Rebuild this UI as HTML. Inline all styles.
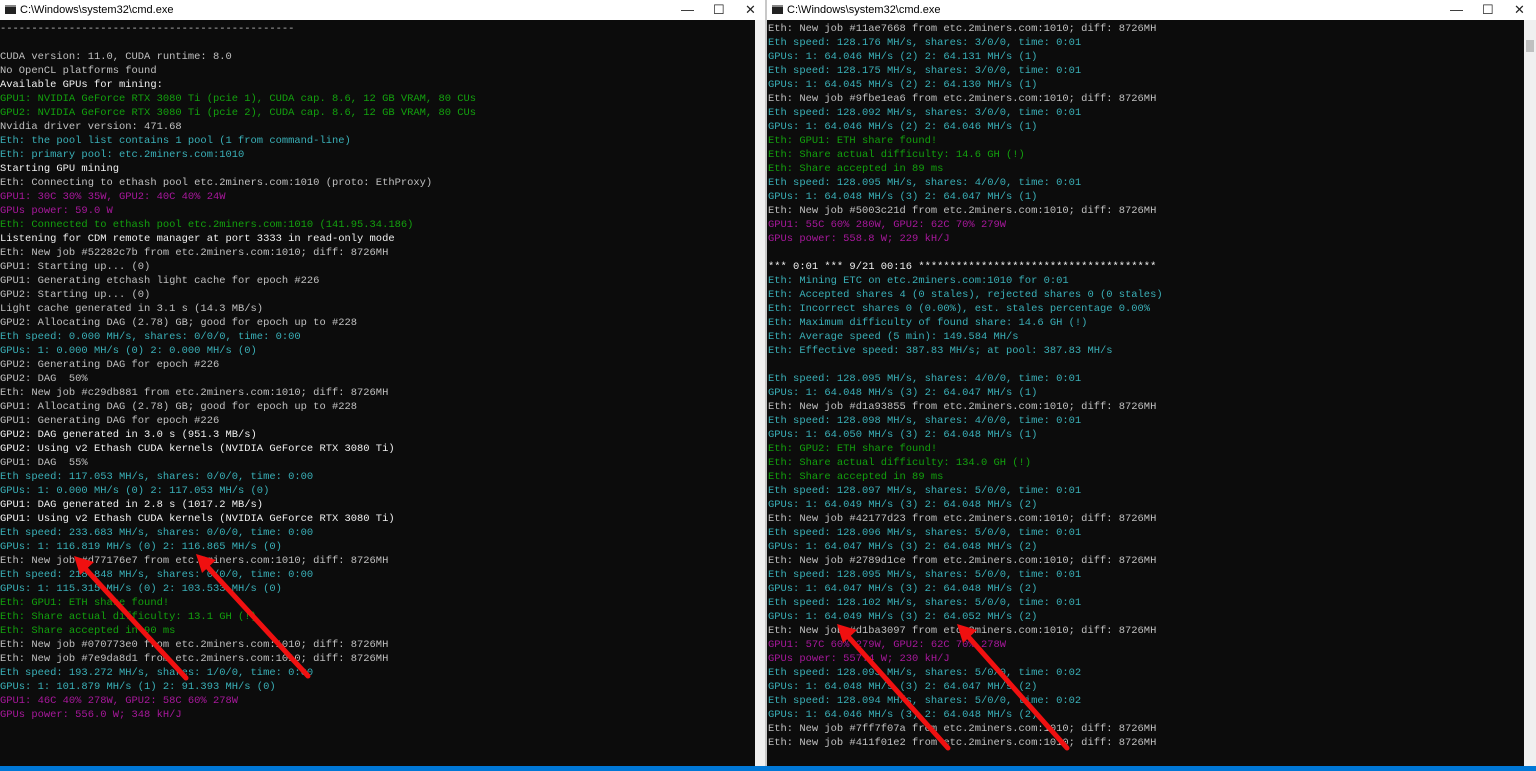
<!DOCTYPE html>
<html><head><meta charset="utf-8"><style>
*{margin:0;padding:0;box-sizing:border-box}
body{width:1536px;height:771px;overflow:hidden;background:#fff;position:relative;font-family:"Liberation Mono",monospace}
.tb{position:absolute;top:0;height:20px;background:#fff;font-family:"Liberation Sans",sans-serif;font-size:11px;color:#000}
.tb .ic{position:absolute;left:5px;top:5px;width:11px;height:9px;background:#222;border-top:2px solid #888}
.tb .t{position:absolute;left:20px;top:4px}
.tb .c{position:absolute;top:2px;font-size:13px;color:#222}
.con{position:absolute;top:20px;height:746px;background:#0c0c0c;overflow:hidden}
pre{font-family:"Liberation Mono",monospace;font-size:10.45px;line-height:14px;color:#c0c0c0;padding-top:2px;white-space:pre}
.w{color:#f2f2f2}.c{color:#3ab0b8}.g{color:#13a10e}.m{color:#a8189c}
.sb{position:absolute;top:20px;height:746px;background:#f0f0f0}
</style></head><body>
<div class="tb" style="left:0;width:765px"><div class="ic"></div><div class="t">C:\Windows\system32\cmd.exe</div><div class="c" style="left:681px">—</div><div class="c" style="left:713px">☐</div><div class="c" style="left:745px">✕</div></div>
<div class="tb" style="left:767px;width:769px"><div class="ic"></div><div class="t">C:\Windows\system32\cmd.exe</div><div class="c" style="left:683px">—</div><div class="c" style="left:715px">☐</div><div class="c" style="left:747px">✕</div></div>
<div style="position:absolute;left:765px;top:0;width:2px;height:771px;background:#c8c8c8"></div>
<div class="con" style="left:0;width:755px"><pre>-----------------------------------------------

CUDA version: 11.0, CUDA runtime: 8.0
No OpenCL platforms found
<span class="w">Available GPUs for mining:</span>
<span class="g">GPU1: NVIDIA GeForce RTX 3080 Ti (pcie 1), CUDA cap. 8.6, 12 GB VRAM, 80 CUs</span>
<span class="g">GPU2: NVIDIA GeForce RTX 3080 Ti (pcie 2), CUDA cap. 8.6, 12 GB VRAM, 80 CUs</span>
Nvidia driver version: 471.68
<span class="c">Eth: the pool list contains 1 pool (1 from command-line)</span>
<span class="c">Eth: primary pool: etc.2miners.com:1010</span>
<span class="w">Starting GPU mining</span>
Eth: Connecting to ethash pool etc.2miners.com:1010 (proto: EthProxy)
<span class="m">GPU1: 30C 30% 35W, GPU2: 40C 40% 24W</span>
<span class="m">GPUs power: 59.0 W</span>
<span class="g">Eth: Connected to ethash pool etc.2miners.com:1010 (141.95.34.186)</span>
<span class="w">Listening for CDM remote manager at port 3333 in read-only mode</span>
Eth: New job #52282c7b from etc.2miners.com:1010; diff: 8726MH
GPU1: Starting up... (0)
GPU1: Generating etchash light cache for epoch #226
GPU2: Starting up... (0)
Light cache generated in 3.1 s (14.3 MB/s)
GPU2: Allocating DAG (2.78) GB; good for epoch up to #228
<span class="c">Eth speed: 0.000 MH/s, shares: 0/0/0, time: 0:00</span>
<span class="c">GPUs: 1: 0.000 MH/s (0) 2: 0.000 MH/s (0)</span>
GPU2: Generating DAG for epoch #226
GPU2: DAG  50%
Eth: New job #c29db881 from etc.2miners.com:1010; diff: 8726MH
GPU1: Allocating DAG (2.78) GB; good for epoch up to #228
GPU1: Generating DAG for epoch #226
<span class="w">GPU2: DAG generated in 3.0 s (951.3 MB/s)</span>
<span class="w">GPU2: Using v2 Ethash CUDA kernels (NVIDIA GeForce RTX 3080 Ti)</span>
GPU1: DAG  55%
<span class="c">Eth speed: 117.053 MH/s, shares: 0/0/0, time: 0:00</span>
<span class="c">GPUs: 1: 0.000 MH/s (0) 2: 117.053 MH/s (0)</span>
<span class="w">GPU1: DAG generated in 2.8 s (1017.2 MB/s)</span>
<span class="w">GPU1: Using v2 Ethash CUDA kernels (NVIDIA GeForce RTX 3080 Ti)</span>
<span class="c">Eth speed: 233.683 MH/s, shares: 0/0/0, time: 0:00</span>
<span class="c">GPUs: 1: 116.819 MH/s (0) 2: 116.865 MH/s (0)</span>
Eth: New job #d77176e7 from etc.2miners.com:1010; diff: 8726MH
<span class="c">Eth speed: 218.848 MH/s, shares: 0/0/0, time: 0:00</span>
<span class="c">GPUs: 1: 115.315 MH/s (0) 2: 103.533 MH/s (0)</span>
<span class="g">Eth: GPU1: ETH share found!</span>
<span class="g">Eth: Share actual difficulty: 13.1 GH (!)</span>
<span class="g">Eth: Share accepted in 90 ms</span>
Eth: New job #070773e0 from etc.2miners.com:1010; diff: 8726MH
Eth: New job #7e9da8d1 from etc.2miners.com:1010; diff: 8726MH
<span class="c">Eth speed: 193.272 MH/s, shares: 1/0/0, time: 0:00</span>
<span class="c">GPUs: 1: 101.879 MH/s (1) 2: 91.393 MH/s (0)</span>
<span class="m">GPU1: 46C 40% 278W, GPU2: 58C 60% 278W</span>
<span class="m">GPUs power: 556.0 W; 348 kH/J</span></pre></div>
<div class="sb" style="left:755px;width:10px"></div>
<div class="con" style="left:767px;width:757px;padding-left:1px"><pre>Eth: New job #11ae7668 from etc.2miners.com:1010; diff: 8726MH
<span class="c">Eth speed: 128.176 MH/s, shares: 3/0/0, time: 0:01</span>
<span class="c">GPUs: 1: 64.046 MH/s (2) 2: 64.131 MH/s (1)</span>
<span class="c">Eth speed: 128.175 MH/s, shares: 3/0/0, time: 0:01</span>
<span class="c">GPUs: 1: 64.045 MH/s (2) 2: 64.130 MH/s (1)</span>
Eth: New job #9fbe1ea6 from etc.2miners.com:1010; diff: 8726MH
<span class="c">Eth speed: 128.092 MH/s, shares: 3/0/0, time: 0:01</span>
<span class="c">GPUs: 1: 64.046 MH/s (2) 2: 64.046 MH/s (1)</span>
<span class="g">Eth: GPU1: ETH share found!</span>
<span class="g">Eth: Share actual difficulty: 14.6 GH (!)</span>
<span class="g">Eth: Share accepted in 89 ms</span>
<span class="c">Eth speed: 128.095 MH/s, shares: 4/0/0, time: 0:01</span>
<span class="c">GPUs: 1: 64.048 MH/s (3) 2: 64.047 MH/s (1)</span>
Eth: New job #5003c21d from etc.2miners.com:1010; diff: 8726MH
<span class="m">GPU1: 55C 60% 280W, GPU2: 62C 70% 279W</span>
<span class="m">GPUs power: 558.8 W; 229 kH/J</span>

<span class="w">*** 0:01 *** 9/21 00:16 **************************************</span>
<span class="c">Eth: Mining ETC on etc.2miners.com:1010 for 0:01</span>
<span class="c">Eth: Accepted shares 4 (0 stales), rejected shares 0 (0 stales)</span>
<span class="c">Eth: Incorrect shares 0 (0.00%), est. stales percentage 0.00%</span>
<span class="c">Eth: Maximum difficulty of found share: 14.6 GH (!)</span>
<span class="c">Eth: Average speed (5 min): 149.584 MH/s</span>
<span class="c">Eth: Effective speed: 387.83 MH/s; at pool: 387.83 MH/s</span>

<span class="c">Eth speed: 128.095 MH/s, shares: 4/0/0, time: 0:01</span>
<span class="c">GPUs: 1: 64.048 MH/s (3) 2: 64.047 MH/s (1)</span>
Eth: New job #d1a93855 from etc.2miners.com:1010; diff: 8726MH
<span class="c">Eth speed: 128.098 MH/s, shares: 4/0/0, time: 0:01</span>
<span class="c">GPUs: 1: 64.050 MH/s (3) 2: 64.048 MH/s (1)</span>
<span class="g">Eth: GPU2: ETH share found!</span>
<span class="g">Eth: Share actual difficulty: 134.0 GH (!)</span>
<span class="g">Eth: Share accepted in 89 ms</span>
<span class="c">Eth speed: 128.097 MH/s, shares: 5/0/0, time: 0:01</span>
<span class="c">GPUs: 1: 64.049 MH/s (3) 2: 64.048 MH/s (2)</span>
Eth: New job #42177d23 from etc.2miners.com:1010; diff: 8726MH
<span class="c">Eth speed: 128.096 MH/s, shares: 5/0/0, time: 0:01</span>
<span class="c">GPUs: 1: 64.047 MH/s (3) 2: 64.048 MH/s (2)</span>
Eth: New job #2789d1ce from etc.2miners.com:1010; diff: 8726MH
<span class="c">Eth speed: 128.095 MH/s, shares: 5/0/0, time: 0:01</span>
<span class="c">GPUs: 1: 64.047 MH/s (3) 2: 64.048 MH/s (2)</span>
<span class="c">Eth speed: 128.102 MH/s, shares: 5/0/0, time: 0:01</span>
<span class="c">GPUs: 1: 64.049 MH/s (3) 2: 64.052 MH/s (2)</span>
Eth: New job #d1ba3097 from etc.2miners.com:1010; diff: 8726MH
<span class="m">GPU1: 57C 60% 279W, GPU2: 62C 70% 278W</span>
<span class="m">GPUs power: 557.4 W; 230 kH/J</span>
<span class="c">Eth speed: 128.093 MH/s, shares: 5/0/0, time: 0:02</span>
<span class="c">GPUs: 1: 64.048 MH/s (3) 2: 64.047 MH/s (2)</span>
<span class="c">Eth speed: 128.094 MH/s, shares: 5/0/0, time: 0:02</span>
<span class="c">GPUs: 1: 64.046 MH/s (3) 2: 64.048 MH/s (2)</span>
Eth: New job #7ff7f07a from etc.2miners.com:1010; diff: 8726MH
Eth: New job #411f01e2 from etc.2miners.com:1010; diff: 8726MH</pre></div>
<div class="sb" style="left:1524px;width:12px"><div style="position:absolute;left:2px;top:20px;width:8px;height:12px;background:#c0c0c0"></div></div>
<div style="position:absolute;left:0;top:766px;width:1536px;height:5px;background:#0078d7"></div>
<svg style="position:absolute;left:0;top:0" width="1536" height="771">
<g stroke="#f01010" stroke-width="5" stroke-linecap="round" fill="#f01010">
<line x1="186" y1="678" x2="82" y2="565"/><polygon points="74,556 94,562 80,575" stroke="none"/>
<line x1="308" y1="676" x2="204" y2="563"/><polygon points="196,554 216,560 202,573" stroke="none"/>
<line x1="948" y1="748" x2="845" y2="633"/><polygon points="837,624 857,630 843,643" stroke="none"/>
<line x1="1067" y1="748" x2="965" y2="633"/><polygon points="957,624 977,630 963,643" stroke="none"/>
</g></svg>
</body></html>
